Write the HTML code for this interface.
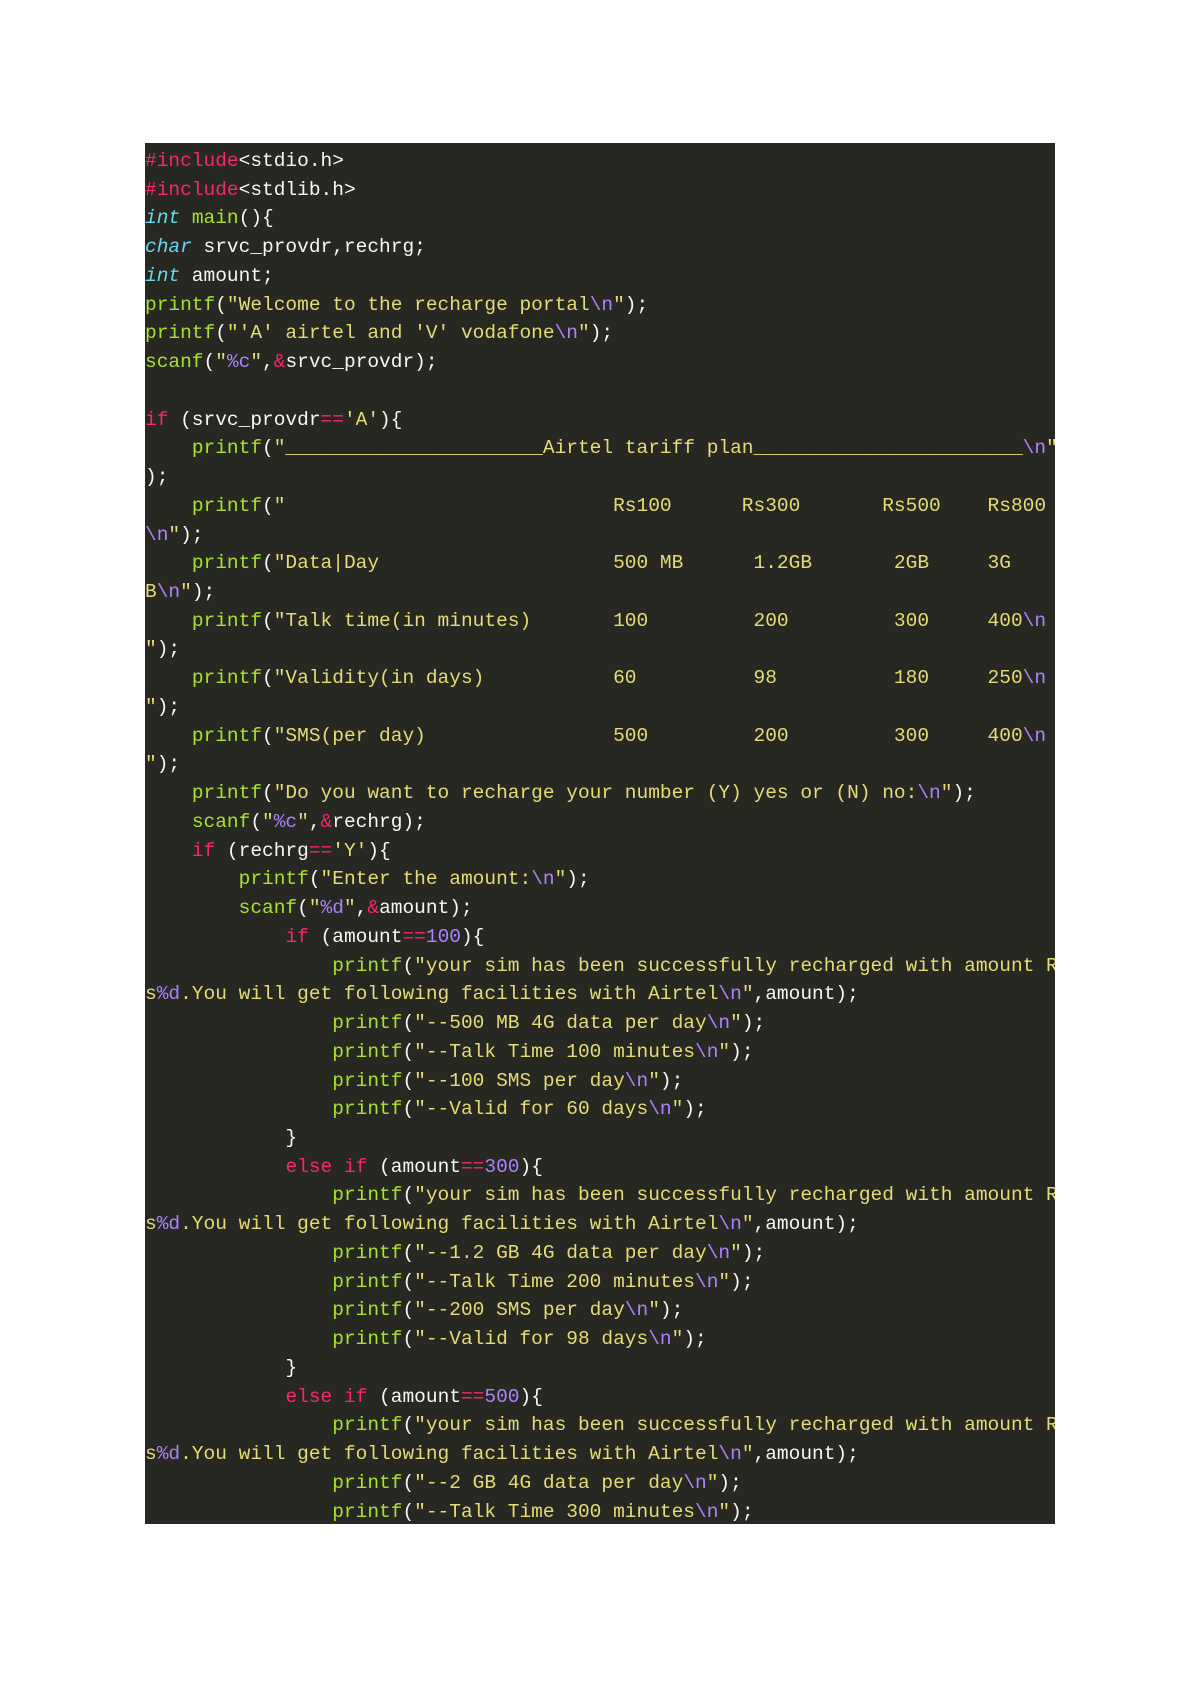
<!DOCTYPE html>
<html><head><meta charset="utf-8"><style>
body{margin:0;background:#fff;width:1200px;height:1698px;position:relative;overflow:hidden}
#box{position:absolute;left:145px;top:143px;width:910px;height:1381px;background:#272822;overflow:hidden}
pre{margin:0;padding-top:4px;font-family:"Liberation Mono",monospace;font-size:19.5px;line-height:28.73px;color:#f8f8f2;white-space:pre}
.k{color:#f92672}.f{color:#a6e22e}.s{color:#e6db74}.p{color:#ae81ff}.t{color:#66d9ef;font-style:italic}
</style></head><body><div id="box"><pre><span class="k">#include</span>&lt;stdio.h&gt;
<span class="k">#include</span>&lt;stdlib.h&gt;
<span class="t">int</span> <span class="f">main</span>(){
<span class="t">char</span> srvc_provdr,rechrg;
<span class="t">int</span> amount;
<span class="f">printf</span>(<span class="s">"Welcome to the recharge portal</span><span class="p">\n</span><span class="s">"</span>);
<span class="f">printf</span>(<span class="s">"'A' airtel and 'V' vodafone</span><span class="p">\n</span><span class="s">"</span>);
<span class="f">scanf</span>(<span class="s">"</span><span class="p">%c</span><span class="s">"</span>,<span class="k">&amp;</span>srvc_provdr);

<span class="k">if</span> (srvc_provdr<span class="k">==</span><span class="s">'A'</span>){
    <span class="f">printf</span>(<span class="s">"______________________Airtel tariff plan_______________________</span><span class="p">\n</span><span class="s">"</span>
);
    <span class="f">printf</span>(<span class="s">"                            Rs100      Rs300       Rs500    Rs800</span>
<span class="p">\n</span><span class="s">"</span>);
    <span class="f">printf</span>(<span class="s">"Data|Day                    500 MB      1.2GB       2GB     3G</span>
<span class="s">B</span><span class="p">\n</span><span class="s">"</span>);
    <span class="f">printf</span>(<span class="s">"Talk time(in minutes)       100         200         300     400</span><span class="p">\n</span>
<span class="s">"</span>);
    <span class="f">printf</span>(<span class="s">"Validity(in days)           60          98          180     250</span><span class="p">\n</span>
<span class="s">"</span>);
    <span class="f">printf</span>(<span class="s">"SMS(per day)                500         200         300     400</span><span class="p">\n</span>
<span class="s">"</span>);
    <span class="f">printf</span>(<span class="s">"Do you want to recharge your number (Y) yes or (N) no:</span><span class="p">\n</span><span class="s">"</span>);
    <span class="f">scanf</span>(<span class="s">"</span><span class="p">%c</span><span class="s">"</span>,<span class="k">&amp;</span>rechrg);
    <span class="k">if</span> (rechrg<span class="k">==</span><span class="s">'Y'</span>){
        <span class="f">printf</span>(<span class="s">"Enter the amount:</span><span class="p">\n</span><span class="s">"</span>);
        <span class="f">scanf</span>(<span class="s">"</span><span class="p">%d</span><span class="s">"</span>,<span class="k">&amp;</span>amount);
            <span class="k">if</span> (amount<span class="k">==</span><span class="p">100</span>){
                <span class="f">printf</span>(<span class="s">"your sim has been successfully recharged with amount R</span>
<span class="s">s</span><span class="p">%d</span><span class="s">.You will get following facilities with Airtel</span><span class="p">\n</span><span class="s">"</span>,amount);
                <span class="f">printf</span>(<span class="s">"--500 MB 4G data per day</span><span class="p">\n</span><span class="s">"</span>);
                <span class="f">printf</span>(<span class="s">"--Talk Time 100 minutes</span><span class="p">\n</span><span class="s">"</span>);
                <span class="f">printf</span>(<span class="s">"--100 SMS per day</span><span class="p">\n</span><span class="s">"</span>);
                <span class="f">printf</span>(<span class="s">"--Valid for 60 days</span><span class="p">\n</span><span class="s">"</span>);
            }
            <span class="k">else if</span> (amount<span class="k">==</span><span class="p">300</span>){
                <span class="f">printf</span>(<span class="s">"your sim has been successfully recharged with amount R</span>
<span class="s">s</span><span class="p">%d</span><span class="s">.You will get following facilities with Airtel</span><span class="p">\n</span><span class="s">"</span>,amount);
                <span class="f">printf</span>(<span class="s">"--1.2 GB 4G data per day</span><span class="p">\n</span><span class="s">"</span>);
                <span class="f">printf</span>(<span class="s">"--Talk Time 200 minutes</span><span class="p">\n</span><span class="s">"</span>);
                <span class="f">printf</span>(<span class="s">"--200 SMS per day</span><span class="p">\n</span><span class="s">"</span>);
                <span class="f">printf</span>(<span class="s">"--Valid for 98 days</span><span class="p">\n</span><span class="s">"</span>);
            }
            <span class="k">else if</span> (amount<span class="k">==</span><span class="p">500</span>){
                <span class="f">printf</span>(<span class="s">"your sim has been successfully recharged with amount R</span>
<span class="s">s</span><span class="p">%d</span><span class="s">.You will get following facilities with Airtel</span><span class="p">\n</span><span class="s">"</span>,amount);
                <span class="f">printf</span>(<span class="s">"--2 GB 4G data per day</span><span class="p">\n</span><span class="s">"</span>);
                <span class="f">printf</span>(<span class="s">"--Talk Time 300 minutes</span><span class="p">\n</span><span class="s">"</span>);
</pre></div></body></html>
